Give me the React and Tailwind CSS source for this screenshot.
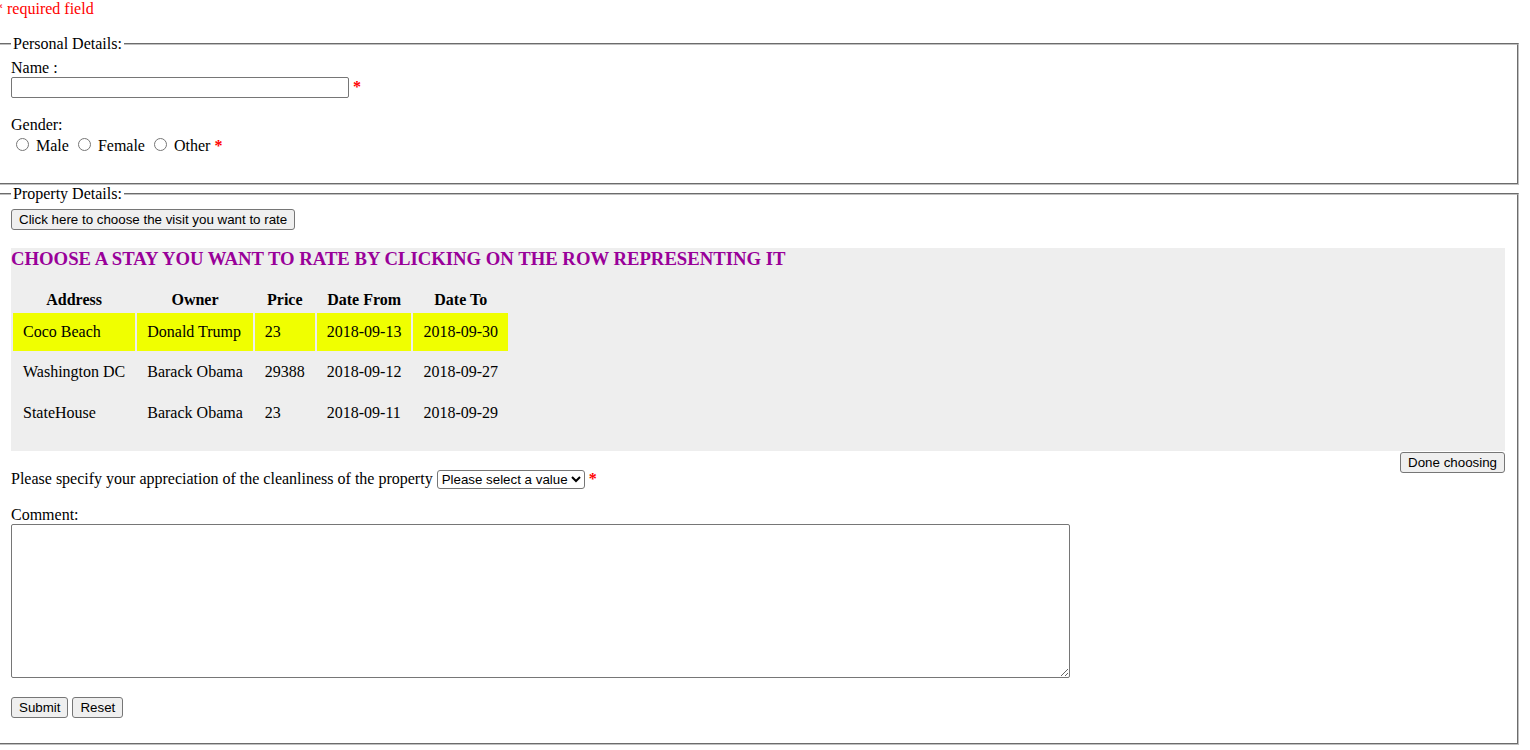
import React from 'react';

const STAYS = [
  { address: 'Coco Beach', owner: 'Donald Trump', price: '23', from: '2018-09-13', to: '2018-09-30' },
  { address: 'Washington DC', owner: 'Barack Obama', price: '29388', from: '2018-09-12', to: '2018-09-27' },
  { address: 'StateHouse', owner: 'Barack Obama', price: '23', from: '2018-09-11', to: '2018-09-29' },
];

const btn =
  "h-[21px] px-[7px] bg-[#efefef] border border-[#767676] rounded-[3px] text-[13.333px] font-['Liberation_Sans',Arial,sans-serif] text-black";

function Req() {
  return <span className="font-bold text-[#ff0000]">*</span>;
}

export default function App() {
  const selected = 0;

  return (
    <div className="overflow-hidden min-h-screen bg-white text-black text-[16px] leading-[1.15] font-['Liberation_Serif','Times_New_Roman',serif]">
      <p className="-ml-[5px] mb-[16.6px] text-[#ff0000]">* required field</p>

      <form onSubmit={(e) => e.preventDefault()}>
        <fieldset className="-ml-[3px] w-[1522px] [border:2px_groove_#c0c0c0] pt-[5.6px] px-3 pb-[10px]">
          <legend className="px-[2px]">Personal Details:</legend>
          <div>Name :</div>
          <div>
            <input
              type="text"
              className="w-[338px] h-[21px] px-[2px] border border-[#767676] rounded-[2px] bg-white text-[13.333px] font-['Liberation_Sans',Arial,sans-serif]"
            />{' '}
            <Req />
          </div>
          <div className="mt-[18px]">Gender:</div>
          <div className="mb-[18px]">
            <input type="radio" name="gender" className="ml-[5px] mr-[3px] mt-[3px]" /> Male{' '}
            <input type="radio" name="gender" className="ml-[5px] mr-[3px] mt-[3px]" /> Female{' '}
            <input type="radio" name="gender" className="ml-[5px] mr-[3px] mt-[3px]" /> Other{' '}
            <Req />
          </div>
        </fieldset>

        <fieldset className="-ml-[3px] w-[1522px] [border:2px_groove_#c0c0c0] pt-[5.6px] px-3 pb-[10px]">
          <legend className="px-[2px]">Property Details:</legend>
          <div>
            <button type="button" className={btn}>
              Click here to choose the visit you want to rate
            </button>
          </div>

          <div className="mt-[18px] bg-[#eeeeee] pb-[17px]">
            <h3 className="text-[18.72px] font-bold text-[#990099]">
              CHOOSE A STAY YOU WANT TO RATE BY CLICKING ON THE ROW REPRESENTING IT
            </h3>
            <table className="mt-[18.7px] border-separate border-spacing-[2px]">
              <thead>
                <tr>
                  {['Address', 'Owner', 'Price', 'Date From', 'Date To'].map((h) => (
                    <th key={h} className="p-[1px] font-bold text-center">
                      {h}
                    </th>
                  ))}
                </tr>
              </thead>
              <tbody>
                {STAYS.map((s, i) => (
                  <tr key={s.address} className={i === selected ? 'bg-[#f0ff00]' : ''}>
                    <td className="p-[10px]">{s.address}</td>
                    <td className="p-[10px]">{s.owner}</td>
                    <td className="p-[10px]">{s.price}</td>
                    <td className="p-[10px]">{s.from}</td>
                    <td className="p-[10px]">{s.to}</td>
                  </tr>
                ))}
              </tbody>
            </table>
          </div>

          <div>
            <button type="button" className={`float-right mt-[1px] ${btn}`}>
              Done choosing
            </button>
            <div className="pt-[19px]">
              Please specify your appreciation of the cleanliness of the property{' '}
              <select className="h-[19px] w-[148px] border border-[#767676] rounded-[3px] bg-white text-[13.333px] font-['Liberation_Sans',Arial,sans-serif]">
                <option>Please select a value</option>
                <option>1</option>
                <option>2</option>
                <option>3</option>
                <option>4</option>
                <option>5</option>
              </select>{' '}
              <Req />
            </div>
          </div>

          <div className="mt-[17px]">Comment:</div>
          <textarea className="block w-[1059px] h-[154px] border border-[#767676] rounded-[2px] bg-white resize" />

          <div className="mt-[19px] mb-[15px] flex gap-[4px]">
            <button type="submit" className={btn}>
              Submit
            </button>
            <button type="reset" className={btn}>
              Reset
            </button>
          </div>
        </fieldset>
      </form>
    </div>
  );
}
